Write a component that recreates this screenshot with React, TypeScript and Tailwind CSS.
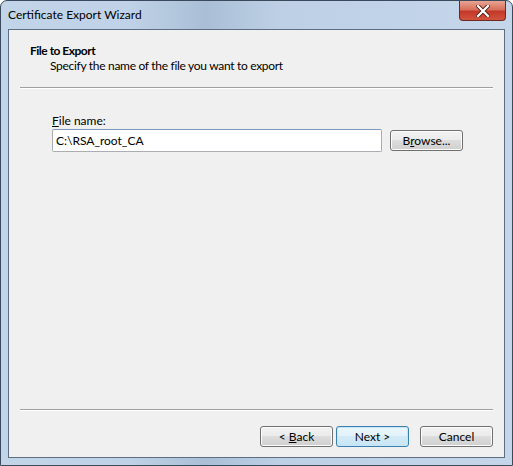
import React from "react"

const font = { fontFamily: 'Lato, "Noto Sans", Arial, sans-serif' }

function WinButton({ children, primary = false, className = "" }: { children: React.ReactNode; primary?: boolean; className?: string }) {
  return (
    <div
      className={`h-[21px] w-[73px] rounded-[3px] border flex items-center justify-center text-[12px] text-black ${
        primary
          ? "border-[#3c7fb1] shadow-[inset_0_0_0_1px_#c5e6f8] bg-[linear-gradient(#eaf6fd_0%,#e2f2fb_50%,#d3ebf8_50%,#c8e4f4_100%)]"
          : "border-[#707070] shadow-[inset_0_0_0_1px_#fcfcfc] bg-[linear-gradient(#f2f2f2_0%,#ebebeb_50%,#dddddd_50%,#cfcfcf_100%)]"
      } ${className}`}
    >
      <span>{children}</span>
    </div>
  )
}

export default function App() {
  return (
    <div className="w-[513px] h-[466px] bg-white" style={font}>
      <div className="w-full h-full flex flex-col rounded-t-[7px] border border-[#3a4a5c] bg-[linear-gradient(90deg,#c2d4e8_0%,#bfd2e7_25%,#aabfd6_40%,#bdd0e6_55%,#c5d6ea_100%)]">
        {/* Title bar */}
        <div className="h-[28px] flex items-start justify-between">
          <span className="pl-[7px] pt-[6px] text-[12px] leading-[15px] text-black">Certificate Export Wizard</span>
          <div className="mr-[6px] w-[47px] h-[20px] rounded-b-[4px] border border-t-0 border-[#6b2b24] bg-[linear-gradient(#e8a493_0%,#d7705c_45%,#c4382a_55%,#d2543c_100%)] flex items-center justify-center">
            <svg width="14" height="12" viewBox="0 0 14 12">
              <path d="M2 1 L12 11 M12 1 L2 11" stroke="#5a1e18" strokeWidth="4" strokeLinecap="square" />
              <path d="M2 1 L12 11 M12 1 L2 11" stroke="#ffffff" strokeWidth="2.2" strokeLinecap="square" />
            </svg>
          </div>
        </div>

        {/* Client area */}
        <div className="flex-1 mx-[7px] mb-[7px] border border-[#5d6d82] bg-[#f0f0f0] flex flex-col">
          <div className="pl-[21px] pt-[13px] text-[12px] leading-[15px] text-black">
            <div className="font-bold tracking-[-0.5px]">File to Export</div>
            <div className="pl-[20px] tracking-[-0.3px]">Specify the name of the file you want to export</div>
          </div>

          <div className="mx-[11px] mt-[14px] h-[2px] border-t border-[#a0a0a0] border-b border-b-white" />

          <div className="pl-[43px] pt-[24px]">
            <div className="text-[12px] leading-[15px] text-black">
              <span className="underline">F</span>ile name:
            </div>
            <div className="flex items-center mt-[1px]">
              <div className="w-[330px] h-[23px] border border-[#abadb3] border-t-[#7d98bd] rounded-[2px] bg-white flex items-center pl-[3px] text-[12px] text-black">
                C:\RSA_root_CA
              </div>
              <WinButton className="ml-[8px]">
                B<span className="underline">r</span>owse...
              </WinButton>
            </div>
          </div>

          <div className="flex-1" />

          <div className="mx-[11px] h-[2px] border-t border-[#a0a0a0] border-b border-b-white" />

          <div className="flex justify-end pr-[11px] pt-[15px] pb-[10px]">
            <WinButton>
              &lt; <span className="underline">B</span>ack
            </WinButton>
            <WinButton primary className="ml-[3px]">
              Next &gt;
            </WinButton>
            <WinButton className="ml-[11px]">Cancel</WinButton>
          </div>
        </div>
      </div>
    </div>
  )
}
